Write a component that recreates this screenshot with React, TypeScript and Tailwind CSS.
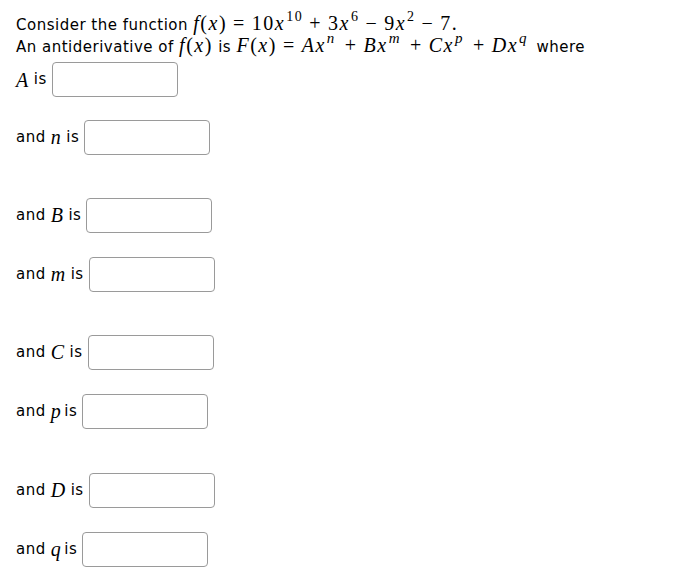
import { FC, ReactNode } from "react";

const M: FC<{ children: ReactNode }> = ({ children }) => (
  <span className="font-['Liberation_Serif',serif] text-[20px] leading-none tracking-[1.5px]">
    {children}
  </span>
);
const I: FC<{ children: ReactNode }> = ({ children }) => <i className="italic">{children}</i>;
const Sup: FC<{ children: ReactNode }> = ({ children }) => (
  <span className="relative top-[-9px] ml-[1px] text-[14px]">{children}</span>
);
// letter exponents in the antiderivative are a bit wider in the original
const SupV: FC<{ v: string }> = ({ v }) => (
  <span className="relative top-[-9px] ml-[1px] mr-[3px] text-[15px] italic">{v}</span>
);
const Op: FC<{ children: ReactNode }> = ({ children }) => (
  <span className="mx-[6px]">{children}</span>
);

const Box: FC = () => (
  <input
    type="text"
    className="ml-[5px] h-[35px] w-[126px] rounded-[4px] border border-[#9a9a9a] bg-white"
  />
);

const items: { v: string; mt: string; isMl: string }[] = [
  { v: "n", mt: "mt-[23px]", isMl: "ml-[4px]" },
  { v: "B", mt: "mt-[43px]", isMl: "ml-[4px]" },
  { v: "m", mt: "mt-[24px]", isMl: "ml-[4px]" },
  { v: "C", mt: "mt-[43px]", isMl: "ml-[4px]" },
  { v: "p", mt: "mt-[24px]", isMl: "ml-[2px]" },
  { v: "D", mt: "mt-[44px]", isMl: "ml-[4px]" },
  { v: "q", mt: "mt-[24px]", isMl: "ml-[2px]" },
];

export default function App() {
  return (
    <div className="px-4 pt-[13px] text-[15px] leading-[19px] tracking-[0.5px] text-black font-['DejaVu_Sans',sans-serif]">
      <div className="whitespace-nowrap">
        Consider the function{" "}
        <M>
          <I>f</I>(<I>x</I>)<Op>=</Op>10<I>x</I>
          <Sup>10</Sup>
          <Op>+</Op>3<I>x</I>
          <Sup>6</Sup>
          <Op>−</Op>9<I>x</I>
          <Sup>2</Sup>
          <Op>−</Op>7.
        </M>
      </div>
      <div className="whitespace-nowrap">
        An antiderivative of{" "}
        <M>
          <I>f</I>(<I>x</I>)
        </M>{" "}
        is{" "}
        <M>
          <I>F</I>(<I>x</I>)<Op>=</Op>
          <I>Ax</I>
          <SupV v="n" />
          <Op>+</Op>
          <I>Bx</I>
          <SupV v="m" />
          <Op>+</Op>
          <I>Cx</I>
          <SupV v="p" />
          <Op>+</Op>
          <I>Dx</I>
          <SupV v="q" />
        </M>{" "}
        where
      </div>
      <div className="mt-[5px] flex items-center">
        <M>
          <I>A</I>
        </M>
        <span className="ml-[4px]">is</span>
        <Box />
      </div>
      {items.map((it, index) => (
        <div key={index} className={`${it.mt} flex items-center`}>
          <span>and</span>
          <span className="ml-[5px]">
            <M>
              <I>{it.v}</I>
            </M>
          </span>
          <span className={it.isMl}>is</span>
          <Box />
        </div>
      ))}
    </div>
  );
}
